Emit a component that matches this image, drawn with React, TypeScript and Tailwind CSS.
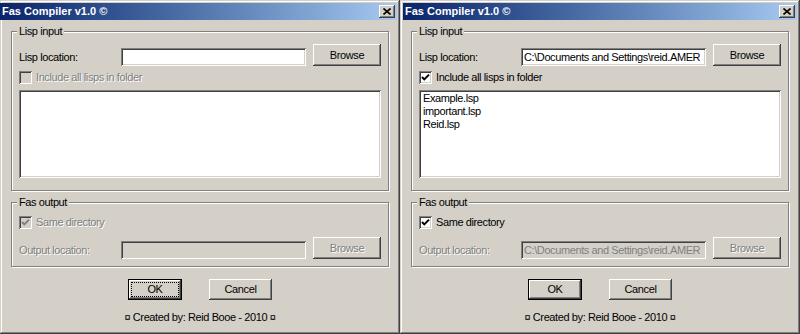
import React from 'react';

const face = "font-['Liberation_Sans',sans-serif] text-[11px] leading-[13px] tracking-[-0.4px]";
const raised = 'shadow-[inset_-1px_-1px_#404040,inset_1px_1px_#fff,inset_-2px_-2px_#808080,inset_2px_2px_#d4d0c8]';
const sunken = 'shadow-[inset_1px_1px_#808080,inset_-1px_-1px_#fff,inset_2px_2px_#404040,inset_-2px_-2px_#d4d0c8]';
const dimText = 'text-[#808080] [text-shadow:1px_1px_#fff]';
const path = 'C:\\Documents and Settings\\reid.AMER';

const Check = ({ checked, disabled, label }: { checked: boolean; disabled?: boolean; label: string }) => (
  <div className="flex h-[13px] items-center gap-[4px]">
    <span className={`block h-[13px] w-[13px] shrink-0 ${sunken} ${disabled ? 'bg-[#d4d0c8]' : 'bg-white'}`}>
      {checked && (
        <svg width="13" height="13" viewBox="0 0 13 13">
          <path d="M3 6 L5.3 8.4 L10 3.6" fill="none" stroke={disabled ? '#808080' : '#000'} strokeWidth="2" />
        </svg>
      )}
    </span>
    <span className={disabled ? dimText : 'text-black'}>{label}</span>
  </div>
);

interface BtnProps {
  label: string;
  width: string;
  disabled?: boolean;
  isDefault?: boolean;
  focused?: boolean;
}

const Button = ({ label, width, disabled, isDefault, focused }: BtnProps) => (
  <div className={`h-[21px] ${width} ${isDefault ? 'border border-black' : ''} shrink-0`}>
    <div className={`flex h-full w-full items-center justify-center bg-[#d4d0c8] p-[3px] ${raised}`}>
      <span
        className={`flex h-full w-full items-center justify-center ${disabled ? dimText : 'text-black'} ${
          focused ? 'outline outline-1 outline-dotted outline-black' : ''
        }`}
      >
        {label}
      </span>
    </div>
  </div>
);

const Field = ({ value, disabled }: { value?: string; disabled?: boolean }) => (
  <div
    className={`flex h-[18px] min-w-0 flex-1 items-center overflow-hidden whitespace-nowrap px-[3px] ${sunken} ${
      disabled ? 'bg-[#d4d0c8] text-[#808080]' : 'bg-white text-black'
    }`}
  >
    {value}
  </div>
);

const Group = ({ title, className, children }: { title: string; className: string; children: React.ReactNode }) => (
  <fieldset className={`border border-[#808080] px-[7px] shadow-[inset_1px_1px_#fff,1px_1px_#fff] ${className}`}>
    <legend className="-ml-[2px] bg-[#d4d0c8] px-[2px]">{title}</legend>
    {children}
  </fieldset>
);

const Row = ({ label, dim, value, fieldDisabled, btnDisabled }: {
  label: string;
  dim?: boolean;
  value?: string;
  fieldDisabled?: boolean;
  btnDisabled?: boolean;
}) => (
  <div className="flex items-end gap-[7px]">
    <div className="flex h-[18px] min-w-0 flex-1 items-center">
      <span className={`w-[102px] shrink-0 ${dim ? dimText : 'text-black'}`}>{label}</span>
      <Field value={value} disabled={fieldDisabled} />
    </div>
    <div className="h-[22px] w-[68px] shrink-0">
      <div className={`flex h-full w-full items-center justify-center bg-[#d4d0c8] ${raised}`}>
        <span className={btnDisabled ? dimText : 'text-black'}>Browse</span>
      </div>
    </div>
  </div>
);

const Dialog = ({ filled, first }: { filled: boolean; first?: boolean }) => (
  <div
    className={`flex h-[334px] w-[400px] shrink-0 flex-col bg-[#d4d0c8] p-[3px] ${face} shadow-[inset_-1px_-1px_#404040,inset_1px_1px_#d4d0c8,inset_-2px_-2px_#808080,inset_2px_2px_#fff]`}
  >
    <div
      className={`flex h-[17px] items-center justify-between bg-linear-to-r from-[#0a246a] to-[#a6caf0] pl-[2px] pr-[2px] ${
        first ? '-ml-[3px]' : ''
      }`}
    >
      <span className="font-['Liberation_Sans',sans-serif] text-[11px] font-bold tracking-normal text-white">
        Fas Compiler v1.0 ©
      </span>
      <div className={`flex h-[13px] w-[16px] items-center justify-center bg-[#d4d0c8] ${raised}`}>
        <svg width="8" height="7" viewBox="0 0 8 7">
          <path d="M0.5 0.5 L7.5 6.5 M7.5 0.5 L0.5 6.5" stroke="#000" strokeWidth="1.6" />
        </svg>
      </div>
    </div>

    <div className="flex flex-col px-[8px]">
      <Group title="Lisp input" className="mt-[5px] pb-[12px]">
        <div className="mt-[6px]">
          <Row label="Lisp location:" value={filled ? path : ''} />
        </div>
        <div className="mt-[5px]">
          <Check checked={filled} disabled={!filled} label="Include all lisps in folder" />
        </div>
        <div className={`mt-[6px] h-[88px] bg-white px-[4px] py-[2px] ${sunken}`}>
          {filled &&
            ['Example.lsp', 'important.lsp', 'Reid.lsp'].map((f) => (
              <div key={f} className="text-black">
                {f}
              </div>
            ))}
        </div>
      </Group>

      <Group title="Fas output" className="mt-[5px] pb-[7px]">
        <div className="mt-[7px]">
          <Check checked disabled={!filled} label="Same directory" />
        </div>
        <div className="mt-[8px]">
          <Row label="Output location:" dim value={filled ? path : ''} fieldDisabled btnDisabled />
        </div>
      </Group>

      <div className="mt-[12px] flex justify-center gap-[27px]">
        <Button label="OK" width="w-[54px]" isDefault focused={!filled} />
        <Button label="Cancel" width="w-[63px]" />
      </div>
      <div className="mt-[11px] text-center text-black">¤ Created by: Reid Booe - 2010 ¤</div>
    </div>
  </div>
);

export default function App() {
  return (
    <div className="flex h-[334px] w-[800px] overflow-hidden bg-[#d4d0c8]">
      <Dialog filled={false} first />
      <Dialog filled />
    </div>
  );
}
